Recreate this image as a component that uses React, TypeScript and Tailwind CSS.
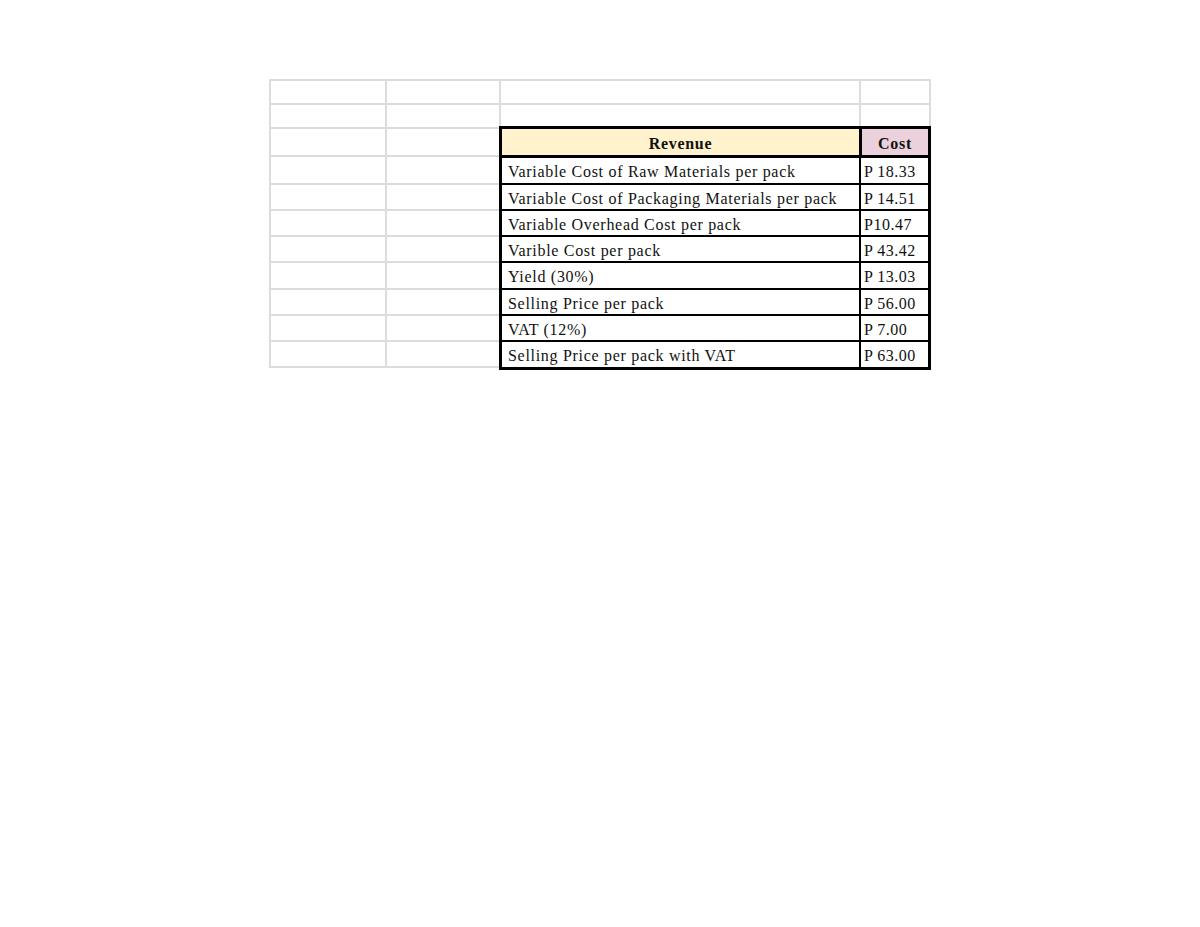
import React from "react";

const leftRowHeights = [26, 24, 28, 28, 26, 26, 26, 27, 26, 26, 26];

const dataRows: { label: string; value: string; h: string }[] = [
  { label: "Variable Cost of Raw Materials per pack", value: "P 18.33", h: "h-[27px]" },
  { label: "Variable Cost of Packaging Materials per pack", value: "P 14.51", h: "h-[26px]" },
  { label: "Variable Overhead Cost per pack", value: "P10.47", h: "h-[26px]" },
  { label: "Varible Cost per pack", value: "P 43.42", h: "h-[26px]" },
  { label: "Yield (30%)", value: "P 13.03", h: "h-[27px]" },
  { label: "Selling Price per pack", value: "P 56.00", h: "h-[26px]" },
  { label: "VAT (12%)", value: "P 7.00", h: "h-[26px]" },
  { label: "Selling Price per pack with VAT", value: "P 63.00", h: "h-[25px]" },
];

export default function App() {
  return (
    <div
      className="w-[1200px] h-[927px] bg-white text-[#111]"
      style={{ fontFamily: '"Liberation Serif", "Times New Roman", serif' }}
    >
      <div className="flex pl-[269px] pt-[79px]">
        {/* Left gray grid, two columns */}
        <div className="flex flex-col">
          {leftRowHeights.map((h, i) => (
            <div key={i} className="flex" style={{ height: h }}>
              <div
                className={`w-[118px] border-l-2 border-r-2 border-b-2 border-[#dcdcdc] ${
                  i === 0 ? "border-t-2" : ""
                }`}
              />
              <div
                className={`w-[112px] border-b-2 border-[#dcdcdc] ${i === 0 ? "border-t-2" : ""}`}
              />
            </div>
          ))}
        </div>

        {/* Right block */}
        <div className="flex flex-col">
          <div className="flex h-[26px]">
            <div className="w-[360px] border-l-2 border-t-2 border-b-2 border-[#dcdcdc]" />
            <div className="w-[72px] border-l-2 border-r-2 border-t-2 border-b-2 border-[#dcdcdc]" />
          </div>
          <div className="flex h-[21px]">
            <div className="w-[360px] border-l-2 border-[#dcdcdc]" />
            <div className="w-[72px] border-l-2 border-r-2 border-[#dcdcdc]" />
          </div>

          <div className="w-[432px] border-[3px] border-black flex flex-col">
            <div className="flex h-[29px] border-b-[3px] border-black">
              <div className="w-[357px] bg-[#fff2cc] flex items-center justify-center pt-[3px] font-bold text-[16px] tracking-[0.7px]">
                Revenue
              </div>
              <div className="w-[3px] bg-black" />
              <div className="flex-1 bg-[#ead1dc] flex items-center justify-center pt-[3px] font-bold text-[16px] tracking-[0.7px]">
                Cost
              </div>
            </div>
            {dataRows.map((r, i) => (
              <div
                key={i}
                className={`flex ${r.h} ${i < dataRows.length - 1 ? "border-b-2 border-black" : ""}`}
              >
                <div className="w-[357px] flex items-center pl-[6px] pt-[3px] text-[16px] tracking-[0.7px] whitespace-nowrap">
                  {r.label}
                </div>
                <div className="w-[2px] bg-black" />
                <div className="flex-1 flex items-center pl-[3px] pt-[3px] text-[16px] tracking-[0.5px] whitespace-nowrap">
                  {r.value}
                </div>
              </div>
            ))}
          </div>
        </div>
      </div>
    </div>
  );
}
